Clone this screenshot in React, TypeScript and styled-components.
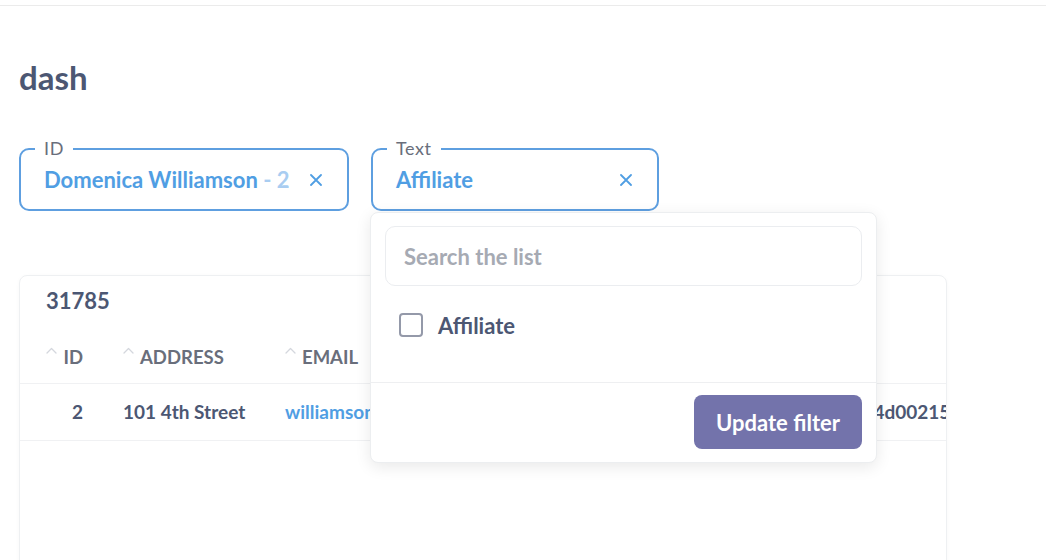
import React from "react";
import styled, { createGlobalStyle } from "styled-components";

const Global = createGlobalStyle`
  html, body { margin: 0; padding: 0; background: #ffffff; overflow: hidden; }
  body { font-family: Lato, "Noto Sans", sans-serif; color: #4c5773; }
  * { box-sizing: border-box; }
`;

const TopBar = styled.div`
  height: 6px;
  border-bottom: 1px solid #ebebeb;
`;

const Page = styled.div`
  padding: 0 19px;
`;

const Title = styled.h1`
  margin: 51px 0 0;
  font-size: 33px;
  line-height: 40px;
  font-weight: 700;
  color: #4c5773;
`;

const FilterRow = styled.div`
  display: flex;
  gap: 22px;
  margin-top: 51px;
`;

const FilterWrap = styled.div`
  position: relative;
`;

const FilterBox = styled.div<{ $w: number }>`
  position: relative;
  width: ${(p) => p.$w}px;
  height: 63px;
  border: 2px solid #5e9fe0;
  border-radius: 10px;
  display: flex;
  align-items: center;
  padding: 0 25px 0 23px;
`;

const FilterLabel = styled.span`
  position: absolute;
  top: -12px;
  left: 14px;
  padding: 0 9px;
  background: #ffffff;
  font-size: 18px;
  line-height: 20px;
  color: #696e7b;
  letter-spacing: 0.6px;
`;

const FilterValue = styled.span`
  font-size: 22px;
  font-weight: 700;
  color: #509ee3;
  white-space: nowrap;
`;

const FilterSuffix = styled.span`
  color: #a9cdf1;
`;

const ClearIcon = styled.svg`
  margin-left: auto;
  flex: none;
`;

const Popover = styled.div`
  position: absolute;
  top: calc(100% + 1px);
  left: -1px;
  width: 507px;
  background: #ffffff;
  border: 1px solid #eceef0;
  border-radius: 8px;
  box-shadow: 0 4px 16px rgba(0, 0, 0, 0.09);
  z-index: 10;
`;

const SearchBox = styled.div`
  margin: 13px 14px 0;
  height: 60px;
  border: 1px solid #ebedf0;
  border-radius: 10px;
  display: flex;
  align-items: center;
  padding: 0 18px;
`;

const SearchInput = styled.input`
  border: none;
  outline: none;
  background: transparent;
  width: 100%;
  font-family: Lato, "Noto Sans", sans-serif;
  font-size: 22px;
  font-weight: 700;
  color: #4c5773;
  padding: 0;
  &::placeholder { color: #a6aab3; }
`;

const OptionRow = styled.label`
  display: flex;
  align-items: center;
  gap: 15px;
  margin: 27px 0 45px 28px;
  height: 24px;
`;

const CheckBox = styled.span`
  width: 24px;
  height: 24px;
  border: 2px solid #9499a9;
  border-radius: 4px;
  flex: none;
`;

const OptionLabel = styled.span`
  font-size: 22px;
  font-weight: 700;
  color: #4c5773;
`;

const PopFooter = styled.div`
  border-top: 1px solid #eeeff1;
  padding: 12px 14px 13px;
  display: flex;
  justify-content: flex-end;
`;

const UpdateButton = styled.button`
  width: 168px;
  height: 54px;
  border: none;
  border-radius: 8px;
  background: #7373ab;
  color: #ffffff;
  font-family: Lato, "Noto Sans", sans-serif;
  font-size: 22px;
  font-weight: 700;
`;

const Card = styled.div`
  margin-top: 64px;
  width: 928px;
  height: 330px;
  border: 1px solid #eef0f2;
  border-radius: 8px;
  box-shadow: 0 1px 4px rgba(0, 0, 0, 0.03);
  overflow: hidden;
`;

const Count = styled.div`
  padding: 12px 26px 0;
  font-size: 22px;
  line-height: 26px;
  font-weight: 700;
  color: #4c5773;
`;

const Row = styled.div<{ $h: number; $top?: number }>`
  display: flex;
  gap: 12px;
  height: ${(p) => p.$h + 1}px;
  margin-top: ${(p) => p.$top ?? 0}px;
  border-bottom: 1px solid #f0f1f3;
  align-items: center;
`;

const Cell = styled.div<{ $w: number; $right?: boolean; $link?: boolean; $head?: boolean }>`
  flex: none;
  width: ${(p) => p.$w}px;
  padding: 0 14px;
  display: flex;
  justify-content: ${(p) => (p.$right ? "flex-end" : "flex-start")};
  white-space: nowrap;
  overflow: visible;
  font-size: ${(p) => (p.$head ? 18.5 : 19)}px;
  line-height: 22px;
  font-weight: 700;
  color: ${(p) => (p.$link ? "#509ee3" : p.$head ? "#696e7b" : "#4c5773")};
  text-transform: ${(p) => (p.$head ? "uppercase" : "none")};
`;

const SortIcon = styled.svg`
  flex: none;
  margin: 1px 6px 0 0;
`;

const Chevron = () => (
  <SortIcon width="11" height="7" viewBox="0 0 11 7">
    <path d="M1 6 L5.5 1.5 L10 6" fill="none" stroke="#d4d7dd" strokeWidth="1.3" strokeLinecap="round" strokeLinejoin="round" />
  </SortIcon>
);

const X = () => (
  <ClearIcon width="12" height="12" viewBox="0 0 12 12">
    <path d="M1 1 L11 11 M11 1 L1 11" stroke="#509ee3" strokeWidth="1.8" strokeLinecap="round" />
  </ClearIcon>
);

const cols = [
  { w: 77, right: true },
  { w: 150 },
  { w: 440 },
  { w: 300 },
];

export default function App() {
  return (
    <>
      <Global />
      <TopBar />
      <Page>
        <Title>dash</Title>
        <FilterRow>
          <FilterWrap>
            <FilterBox $w={330}>
              <FilterLabel>ID</FilterLabel>
              <FilterValue>
                Domenica Williamson<FilterSuffix> - 2</FilterSuffix>
              </FilterValue>
              <X />
            </FilterBox>
          </FilterWrap>
          <FilterWrap>
            <FilterBox $w={288}>
              <FilterLabel>Text</FilterLabel>
              <FilterValue>Affiliate</FilterValue>
              <X />
            </FilterBox>
            <Popover>
              <SearchBox>
                <SearchInput placeholder="Search the list" />
              </SearchBox>
              <OptionRow>
                <CheckBox />
                <OptionLabel>Affiliate</OptionLabel>
              </OptionRow>
              <PopFooter>
                <UpdateButton>Update filter</UpdateButton>
              </PopFooter>
            </Popover>
          </FilterWrap>
        </FilterRow>
        <Card>
          <Count>31785</Count>
          <Row $h={53} $top={16}>
            {["ID", "Address", "Email", "Password"].map((h, i) => (
              <Cell key={h} $w={cols[i].w} $right={cols[i].right} $head>
                <Chevron />
                {h}
              </Cell>
            ))}
          </Row>
          <Row $h={56}>
            <Cell $w={cols[0].w} $right>2</Cell>
            <Cell $w={cols[1].w}>101 4th Street</Cell>
            <Cell $w={cols[2].w} $link>williamson-domenica@example.com</Cell>
            <Cell $w={cols[3].w}>5b8e3f1a-c0a2-4d002159-8b1e</Cell>
          </Row>
        </Card>
      </Page>
    </>
  );
}
